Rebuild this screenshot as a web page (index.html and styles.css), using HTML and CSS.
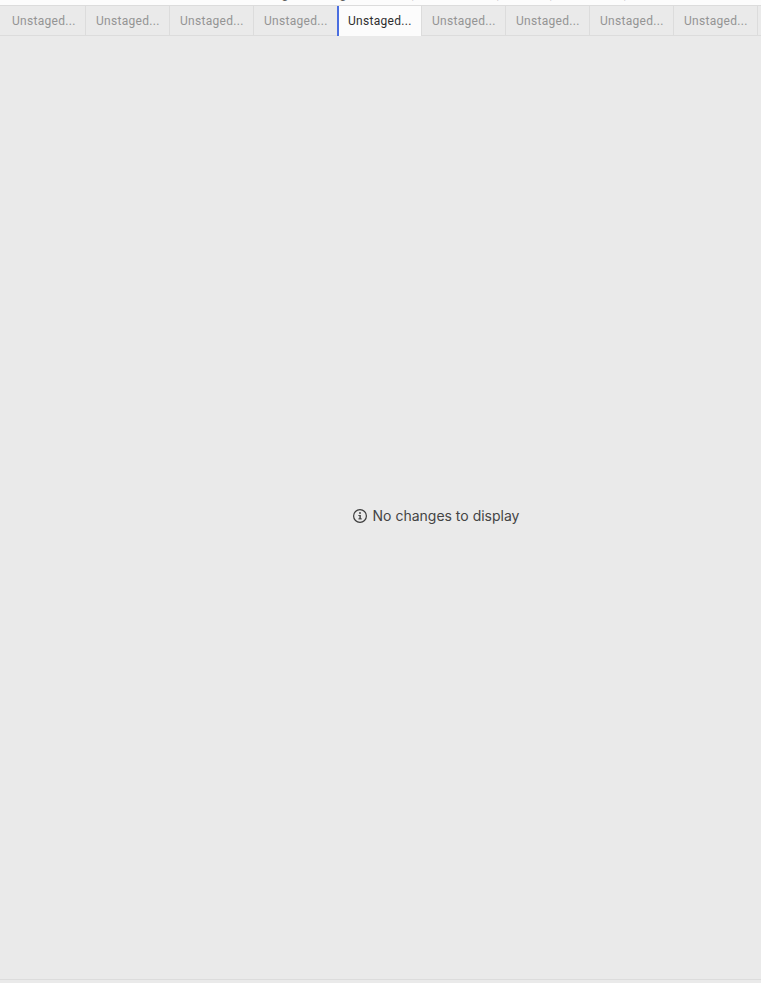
FILE: index.html
```html
<!DOCTYPE html>
<html lang="en">
<head>
    <meta charset="UTF-8">
    <title>Unstaged changes</title>
    <link rel="stylesheet" href="styles.css">
</head>
<body>
    <!-- Bottom edge of the title line, only the descenders show -->
    <div class="header-strip">
        <span class="peek peek-1">g</span>
        <span class="peek peek-2">g</span>
        <span class="peek peek-3">p</span>
        <span class="peek peek-4">_</span>
        <span class="peek peek-5">p</span>
        <span class="peek peek-6">p</span>
        <span class="peek peek-7">p</span>
    </div>

    <div class="tabs">
        <div class="tab">Unstaged...</div>
        <div class="tab">Unstaged...</div>
        <div class="tab">Unstaged...</div>
        <div class="tab">Unstaged...</div>
        <div class="tab active">Unstaged...</div>
        <div class="tab">Unstaged...</div>
        <div class="tab">Unstaged...</div>
        <div class="tab">Unstaged...</div>
        <div class="tab">Unstaged...</div>
    </div>

    <div class="content">
        <div class="empty-message">
            <svg class="info-icon" width="16" height="16" viewBox="0 0 16 16" fill="none">
                <circle cx="8" cy="8" r="6.4" stroke="#3c3c3c" stroke-width="1.2"/>
                <rect x="7.4" y="7" width="1.4" height="4" fill="#3c3c3c"/>
                <rect x="6.4" y="7" width="1.4" height="1" fill="#3c3c3c"/>
                <rect x="6.4" y="10.4" width="3.4" height="1" fill="#3c3c3c"/>
                <circle cx="8" cy="5" r="0.9" fill="#3c3c3c"/>
            </svg>
            <span>No changes to display</span>
        </div>
    </div>

    <div class="footer"></div>
</body>
</html>
```

FILE: styles.css
```css
html, body {
    height: 100%;
}

body {
    margin: 0;
    display: flex;
    flex-direction: column;
    background-color: #eaeaea;
    font-family: "Inter", "Liberation Sans", sans-serif;
    overflow: hidden;
}

.header-strip {
    display: flex;
    flex-shrink: 0;
    align-items: flex-start;
    height: 5px;
    overflow: hidden;
    background-color: #fcfcfc;
}

.peek {
    flex-shrink: 0;
    width: 8px;
    margin-top: -12px;
    text-align: center;
    font-size: 12px;
    line-height: 12px;
    color: #555555;
}

.peek-1 { margin-left: 281px; }
.peek-2 { margin-left: 50px; }
.peek-3 { margin-left: 64px; }
.peek-4 { margin-left: 37px; }
.peek-5 { margin-left: 32px; }
.peek-6 { margin-left: 45px; }
.peek-7 { margin-left: 66px; }

.tabs {
    display: flex;
    flex-shrink: 0;
    height: 29px;
    padding-left: 2px;
    border-top: 1px solid #dcdcdc;
    border-bottom: 1px solid #dcdcdc;
}

.tab {
    width: 84px;
    box-sizing: border-box;
    border-right: 1px solid #dcdcdc;
    padding-left: 10px;
    font-family: "Roboto", "Liberation Sans", sans-serif;
    font-size: 12px;
    letter-spacing: 0.3px;
    line-height: 31px;
    color: #949494;
}

.tab.active {
    width: 85px;
    margin-left: -1px;
    margin-bottom: -1px;
    background-color: #fcfcfc;
    border-left: 2px solid #4a6ee0;
    padding-left: 9px;
    color: #2e2e2e;
}

.content {
    flex: 1;
    display: flex;
    align-items: center;
    justify-content: center;
    padding-left: 110px;
    padding-top: 16px;
}

.empty-message {
    display: flex;
    align-items: center;
    gap: 5px;
    font-size: 14px;
    color: #444444;
}

.footer {
    flex-shrink: 0;
    height: 3px;
    border-top: 1px solid #dcdcdc;
}
```
